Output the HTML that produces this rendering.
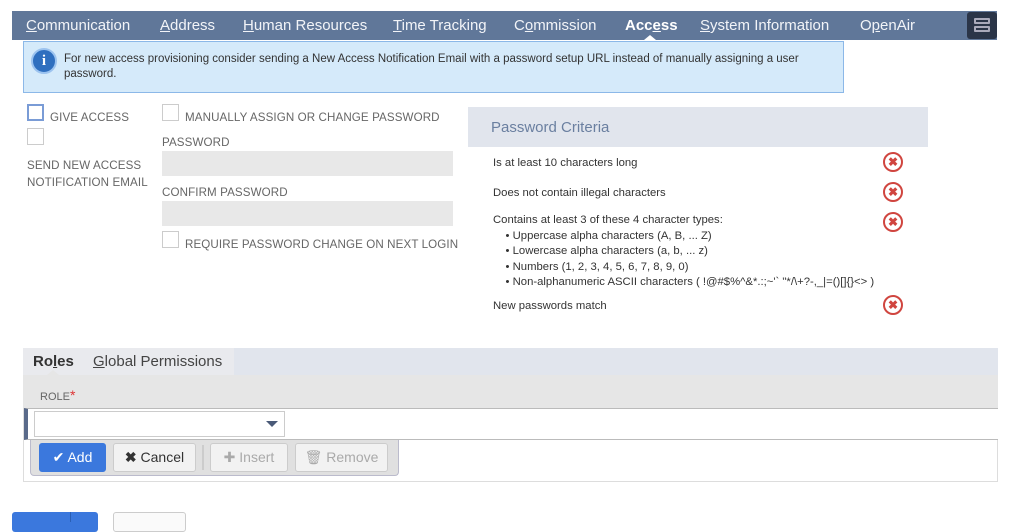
<!DOCTYPE html>
<html><head><meta charset="utf-8"><style>
*{box-sizing:border-box;margin:0;padding:0}
body{width:1024px;height:520px;background:#fff;font-family:"Liberation Sans",sans-serif;position:relative;overflow:hidden;color:#333}
.a{position:absolute}
.nav{left:12px;top:11px;width:985px;height:29px;background:#607799}
.nav span{position:absolute;top:6px;color:#f2f4f8;font-size:15px;white-space:nowrap}
.nav u{text-decoration:underline}
.lbl{font-size:11.6px;color:#666;letter-spacing:.1px}
.cb{width:17px;height:17px;border:1px solid #ccc;background:#fff}
.x{width:20px;height:20px;border:2px solid #d0453f;border-radius:50%;color:#d0453f;font-size:12px;font-weight:bold;text-align:center;line-height:16px}
.crit{font-size:11.3px;color:#333}
.btn{position:absolute;top:443px;height:29px;border:1px solid #ccc;border-radius:3px;background:#f2f2f2;font-size:14px;line-height:27px;text-align:center}
</style></head><body>
<div class="a nav">
<span style="left:14px"><u>C</u>ommunication</span>
<span style="left:148px"><u>A</u>ddress</span>
<span style="left:231px"><u>H</u>uman Resources</span>
<span style="left:381px"><u>T</u>ime Tracking</span>
<span style="left:502px">C<u>o</u>mmission</span>
<span style="left:613px;font-weight:bold;color:#fff">Acc<u>e</u>ss</span>
<span style="left:688px"><u>S</u>ystem Information</span>
<span style="left:848px">O<u>p</u>enAir</span>
<div class="a" style="left:955px;top:1px;width:30px;height:27px;background:#2b3548;border-radius:3px"><div class="a" style="left:7px;top:6px;width:16px;height:6px;border:2px solid #aab;border-radius:1px"></div><div class="a" style="left:7px;top:14px;width:16px;height:6px;border:2px solid #aab;border-radius:1px"></div></div>
<div class="a" style="left:632px;top:24px;width:0;height:0;border-left:6px solid transparent;border-right:6px solid transparent;border-bottom:5px solid #fff"></div>
</div>
<div class="a" style="left:23px;top:41px;width:821px;height:52px;background:#d5eafa;border:1px solid #8cb8e8"></div>
<div class="a" style="left:31px;top:48px;width:26px;height:26px;border-radius:50%;background:#2f6fbf;border:2px solid #9cc3ef;color:#fff;font-weight:bold;font-size:15px;text-align:center;line-height:22px;font-family:'Liberation Serif',serif">i</div>
<div class="a" style="left:64px;top:52px;width:760px;font-size:11.5px;line-height:15px;color:#333">For new access provisioning consider sending a New Access Notification Email with a password setup URL instead of manually assigning a user password.</div>

<div class="a cb" style="left:27px;top:104px;border:2px solid #7a9cd6"></div>
<div class="a lbl" style="left:50px;top:111px">GIVE ACCESS</div>
<div class="a cb" style="left:27px;top:128px"></div>
<div class="a lbl" style="left:27px;top:157px;line-height:17px">SEND NEW ACCESS<br>NOTIFICATION EMAIL</div>
<div class="a cb" style="left:162px;top:104px"></div>
<div class="a lbl" style="left:185px;top:111px">MANUALLY ASSIGN OR CHANGE PASSWORD</div>
<div class="a lbl" style="left:162px;top:136px">PASSWORD</div>
<div class="a" style="left:162px;top:151px;width:291px;height:25px;background:#e8e8e8"></div>
<div class="a lbl" style="left:162px;top:186px">CONFIRM PASSWORD</div>
<div class="a" style="left:162px;top:201px;width:291px;height:25px;background:#e8e8e8"></div>
<div class="a cb" style="left:162px;top:231px"></div>
<div class="a lbl" style="left:185px;top:238px">REQUIRE PASSWORD CHANGE ON NEXT LOGIN</div>

<div class="a" style="left:468px;top:107px;width:460px;height:40px;background:#e1e5ed"></div>
<div class="a" style="left:491px;top:119px;font-size:15px;color:#6a7fa0">Password Criteria</div>
<div class="a crit" style="left:493px;top:157px">Is at least 10 characters long</div>
<div class="a crit" style="left:493px;top:187px">Does not contain illegal characters</div>
<div class="a crit" style="left:493px;top:213px;line-height:15.5px">Contains at least 3 of these 4 character types:<br>&nbsp;&nbsp;&nbsp;&nbsp;• Uppercase alpha characters (A, B, ... Z)<br>&nbsp;&nbsp;&nbsp;&nbsp;• Lowercase alpha characters (a, b, ... z)<br>&nbsp;&nbsp;&nbsp;&nbsp;• Numbers (1, 2, 3, 4, 5, 6, 7, 8, 9, 0)<br>&nbsp;&nbsp;&nbsp;&nbsp;• Non-alphanumeric ASCII characters ( !@#$%^&amp;*.:;~'` "*/\+?-,_|=()[]{}&lt;&gt; )</div>
<div class="a crit" style="left:493px;top:300px">New passwords match</div>
<div class="a x" style="left:883px;top:152px">✖</div>
<div class="a x" style="left:883px;top:182px">✖</div>
<div class="a x" style="left:883px;top:212px">✖</div>
<div class="a x" style="left:883px;top:295px">✖</div>

<div class="a" style="left:23px;top:348px;width:975px;height:134px;border:1px solid #ddd;background:#fff"></div>
<div class="a" style="left:23px;top:348px;width:975px;height:27px;background:#e1e5ed"></div>
<div class="a" style="left:23px;top:348px;width:211px;height:27px;background:#e9eaee"></div>
<div class="a" style="left:33px;top:353px;font-size:15px;font-weight:bold;color:#333">Ro<u>l</u>es</div>
<div class="a" style="left:93px;top:353px;font-size:15px;color:#444"><u>G</u>lobal Permissions</div>
<div class="a" style="left:47px;top:370px;border-left:6px solid transparent;border-right:6px solid transparent;border-bottom:5px solid #e6e6e6"></div>
<div class="a" style="left:23px;top:375px;width:975px;height:33px;background:#e6e6e6"></div>
<div class="a" style="left:40px;top:387px;font-size:11px;color:#666">ROLE<span style="color:#d33;font-size:14px">*</span></div>
<div class="a" style="left:24px;top:408px;width:974px;height:32px;border-top:1px solid #bbb;border-bottom:1px solid #bbb;border-left:4px solid #5a6a8a;background:#fff"></div>
<div class="a" style="left:34px;top:411px;width:251px;height:26px;border:1px solid #ccc;background:#fff"></div>
<div class="a" style="left:266px;top:421px;border-left:6px solid transparent;border-right:6px solid transparent;border-top:6px solid #4a5a78"></div>
<div class="a" style="left:30px;top:440px;width:369px;height:36px;background:#e0e0e0;border:1px solid #bbc;border-top:none;border-radius:0 0 4px 4px"></div>
<div class="btn" style="left:39px;width:67px;background:#3b78dd;border-color:#3b78dd;color:#fff">✔ Add</div>
<div class="btn" style="left:113px;width:83px;color:#333"><b>✖</b> Cancel</div>
<div class="a" style="left:202px;top:445px;width:2px;height:25px;background:#ccc"></div>
<div class="btn" style="left:210px;width:78px;color:#aaa">✚ Insert</div>
<div class="btn" style="left:295px;width:93px;color:#aaa">🗑 Remove</div>

<div class="a" style="left:12px;top:512px;width:86px;height:20px;background:#3b78dd;border-radius:3px"></div>
<div class="a" style="left:70px;top:512px;width:1px;height:10px;background:#2a5fb5"></div>
<div class="a" style="left:113px;top:512px;width:73px;height:20px;border:1px solid #ccc;border-radius:3px;background:#fafafa"></div>
</body></html>
